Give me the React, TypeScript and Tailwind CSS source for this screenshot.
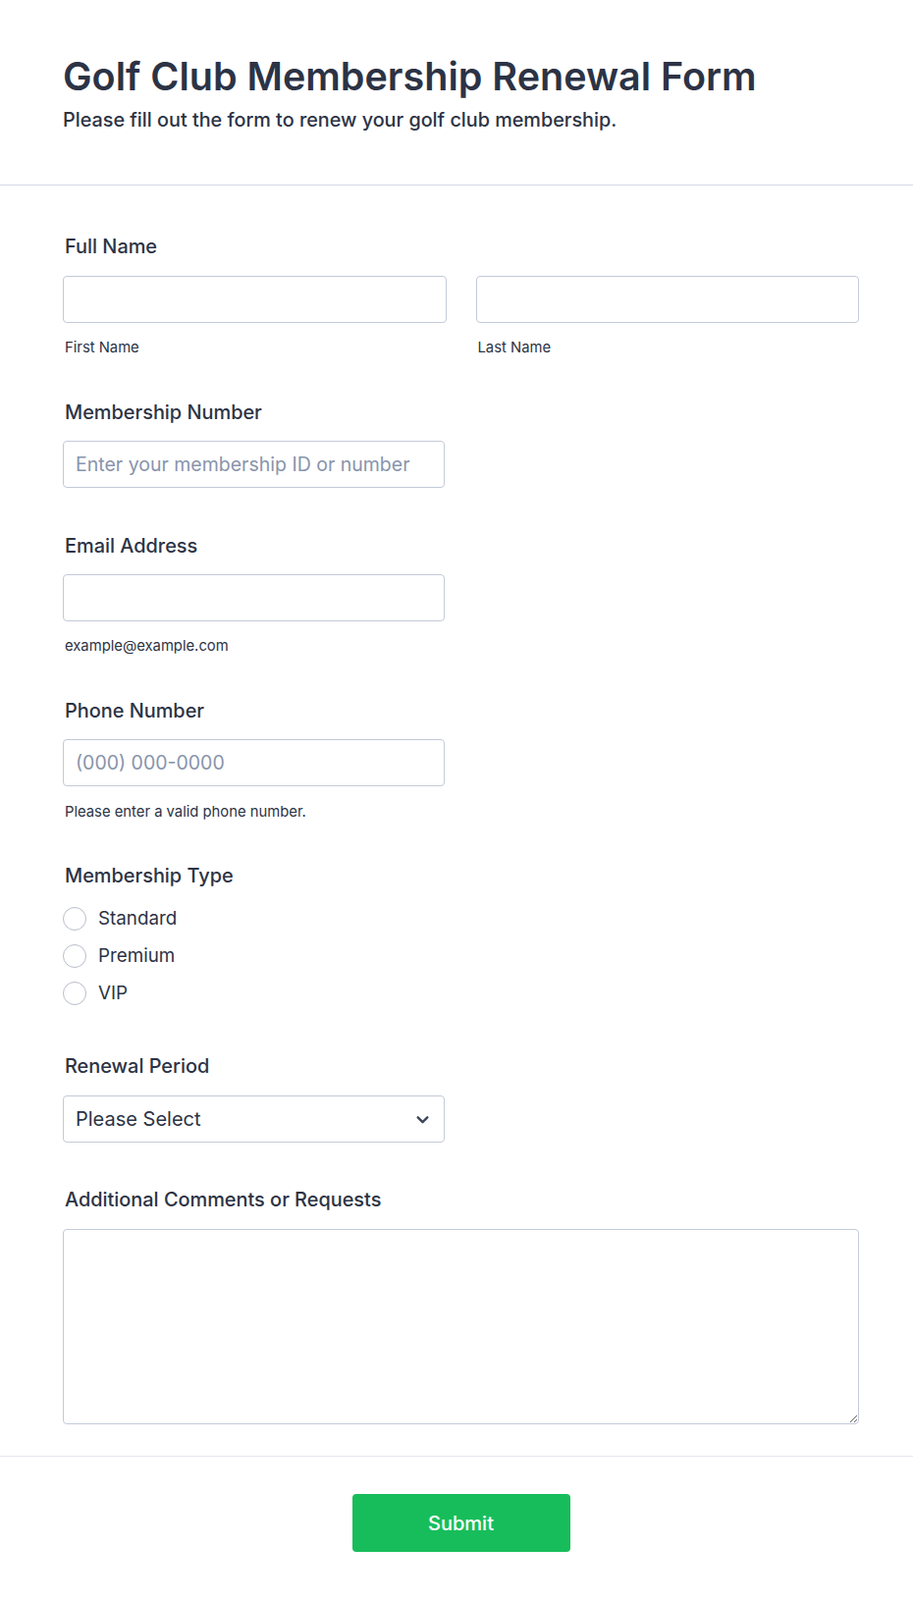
import React from "react";

function Label({ children, className = "" }: { children: React.ReactNode; className?: string }) {
  return (
    <div className={"pl-[2px] text-[19.9px] leading-[24px] font-medium text-[#2c3345] " + className}>
      {children}
    </div>
  );
}

function Sub({ children, className = "" }: { children: React.ReactNode; className?: string }) {
  return <div className={"pl-[2px] text-[14.8px] leading-[20px] text-[#2c3345] " + className}>{children}</div>;
}

const inputCls =
  "block h-[48px] w-full rounded-[4px] border border-[#c3cad8] bg-white px-[12px] text-[19.5px] text-[#2c3345] placeholder:text-[#8894ab] outline-none";

function Radio({ label }: { label: string }) {
  return (
    <label className="flex h-[24px] items-center gap-[12px]">
      <span className="block h-[24px] w-[24px] rounded-full border border-[#b8bdc9] bg-white" />
      <span className="text-[18.8px] leading-[24px] text-[#2c3345]">{label}</span>
    </label>
  );
}

export default function App() {
  return (
    <div className="min-h-[1630px] w-[930px] bg-white font-['Inter',sans-serif] text-[#2c3345]">
      <header className="border-b border-[#d3d8e2] px-[64px] pt-[54px] pb-[54px]">
        <h1 className="text-[39.5px] leading-[48px] font-semibold text-[#2c3345]">
          Golf Club Membership Renewal Form
        </h1>
        <p className="mt-[8px] text-[19.8px] leading-[24px] font-medium text-[#2c3345]">
          Please fill out the form to renew your golf club membership.
        </p>
      </header>

      <main className="pl-[64px] pr-[55px] pt-[50px]">
        <Label>Full Name</Label>
        <div className="mt-[18px] grid grid-cols-2 gap-[30px]">
          <div>
            <input className={inputCls} />
            <Sub className="mt-[15px]">First Name</Sub>
          </div>
          <div>
            <input className={inputCls} />
            <Sub className="mt-[15px]">Last Name</Sub>
          </div>
        </div>

        <Label className="mt-[44px]">Membership Number</Label>
        <div className="mt-[17px] w-[389px]">
          <input className={inputCls} placeholder="Enter your membership ID or number" />
        </div>

        <Label className="mt-[47px]">Email Address</Label>
        <div className="mt-[17px] w-[389px]">
          <input className={inputCls} />
        </div>
        <Sub className="mt-[15px]">example@example.com</Sub>

        <Label className="mt-[44px]">Phone Number</Label>
        <div className="mt-[17px] w-[389px]">
          <input className={inputCls} placeholder="(000) 000-0000" />
        </div>
        <Sub className="mt-[16px]">Please enter a valid phone number.</Sub>

        <Label className="mt-[43px]">Membership Type</Label>
        <div className="mt-[20px] flex flex-col gap-[14px]">
          <Radio label="Standard" />
          <Radio label="Premium" />
          <Radio label="VIP" />
        </div>

        <Label className="mt-[50px]">Renewal Period</Label>
        <div className="mt-[18px] w-[389px]">
          <div className="flex h-[48px] w-full items-center justify-between rounded-[4px] border border-[#c3cad8] bg-white pr-[14px] pl-[12px]">
            <span className="text-[20px] text-[#2c3345]">Please Select</span>
            <svg width="15" height="15" viewBox="0 0 14 14" fill="none">
              <path d="M2.5 5l4.5 4.5L11.5 5" stroke="#3b4559" strokeWidth="2.2" strokeLinecap="round" strokeLinejoin="round" />
            </svg>
          </div>
        </div>

        <Label className="mt-[46px]">Additional Comments or Requests</Label>
        <textarea className="mt-[18px] block h-[199px] w-full rounded-[4px] border border-[#c3cad8] bg-white p-[12px] text-[18px] outline-none" />
      </main>

      <div className="mt-[32px] border-t border-[#e3e6ee] pl-[64px] pr-[55px] pt-[38px] pb-[50px]">
        <div className="flex justify-center">
          <button className="h-[59px] w-[222px] rounded-[4px] bg-[#18bd5b] text-[20px] font-medium text-white">
            Submit
          </button>
        </div>
      </div>
    </div>
  );
}
